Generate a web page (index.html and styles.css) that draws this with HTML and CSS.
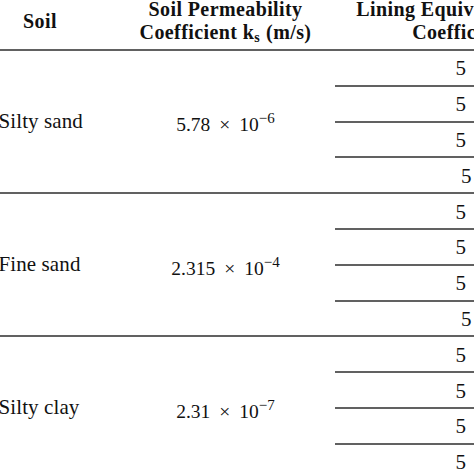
FILE: index.html
```html
<!DOCTYPE html>
<html lang="en">
<head>
<meta charset="utf-8">
<title>Soil permeability table</title>
<link rel="stylesheet" href="styles.css">
</head>
<body>
<div class="table">
  <div class="head">
    <div class="hcell"><span class="htext">Soil</span></div>
    <div class="hcell"><span class="htext">Soil Permeability<br>Coefficient k<sub>s</sub> (m/s)</span></div>
    <div class="hcell"><span class="htext">Lining Equivalent Permeability<br>Coefficient k<sub>l</sub> (m/s)</span></div>
  </div>

  <div class="group">
    <div class="soil">Silty sand</div>
    <div class="perm"><span class="num">5.78<span class="op">×</span>10<sup>−6</sup></span></div>
    <div class="lin">5</div>
    <div class="lin">5</div>
    <div class="lin">5</div>
    <div class="lin last narrow">5</div>
  </div>

  <div class="group">
    <div class="soil">Fine sand</div>
    <div class="perm"><span class="num">2.315<span class="op">×</span>10<sup>−4</sup></span></div>
    <div class="lin">5</div>
    <div class="lin">5</div>
    <div class="lin">5</div>
    <div class="lin last narrow">5</div>
  </div>

  <div class="group">
    <div class="soil">Silty clay</div>
    <div class="perm"><span class="num">2.31<span class="op">×</span>10<sup>−7</sup></span></div>
    <div class="lin">5</div>
    <div class="lin">5</div>
    <div class="lin">5</div>
    <div class="lin last">5</div>
  </div>
</div>
</body>
</html>
```
FILE: styles.css
```css
html, body {
  margin: 0;
  padding: 0;
  background: #ffffff;
  overflow: hidden;
}

body {
  width: 474px;
  height: 474px;
  font-family: "Liberation Serif", "Times New Roman", serif;
  color: #111111;
}

.table {
  margin-left: -36px;
  width: 695.5px;
  display: flex;
  flex-direction: column;
}

.head,
.group {
  display: grid;
  grid-template-columns: 152px 219px 324.5px;
  border-bottom: 2px solid #616161;
}

.head {
  height: 49px;
}

.hcell {
  display: flex;
  align-items: center;
  justify-content: center;
  box-sizing: border-box;
  height: 49px;
  padding-bottom: 7px;
}

.htext {
  display: block;
  text-align: center;
  font-weight: bold;
  font-size: 20px;
  line-height: 23px;
  letter-spacing: 0.4px;
  white-space: nowrap;
}

sub {
  font-size: 14px;
  line-height: 0;
  vertical-align: -3px;
  letter-spacing: 0;
  margin-right: 1px;
}

.group {
  grid-template-rows: repeat(4, auto);
}

.soil {
  grid-column: 1;
  grid-row: 1 / 5;
  display: flex;
  align-items: center;
  padding-left: 34.5px;
  font-size: 21px;
  letter-spacing: 0.1px;
  white-space: nowrap;
}

.perm {
  grid-column: 2;
  grid-row: 1 / 5;
  display: flex;
  align-items: center;
  justify-content: center;
  box-sizing: border-box;
  padding-top: 7px;
}

.num {
  display: block;
  font-size: 19.5px;
  line-height: 1;
  white-space: nowrap;
}

.op {
  margin: 0 9px;
}

sup {
  font-size: 15px;
  line-height: 0;
  vertical-align: 8px;
}

.lin {
  grid-column: 3;
  display: flex;
  align-items: center;
  box-sizing: border-box;
  height: 35.8px;
  padding-top: 2px;
  padding-left: 120.5px;
  border-bottom: 2px solid #616161;
  font-size: 21px;
}

.lin.last {
  height: 33.8px;
  border-bottom: none;
}

.lin.narrow {
  padding-left: 126px;
}
```
